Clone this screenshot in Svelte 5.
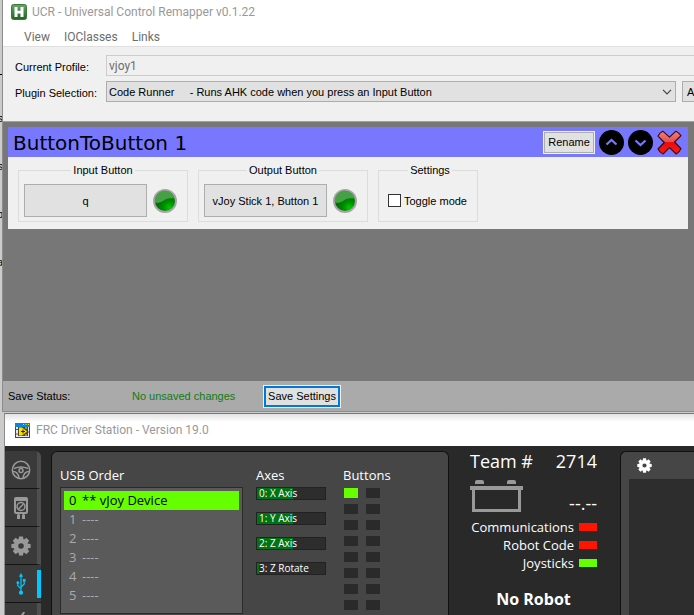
<script lang="ts">
	let profile = $state('vjoy1');
	let toggleMode = $state(false);
	let selectedDevice = $state(0);

	const menus = ['View', 'IOClasses', 'Links'];

	const groups = [
		{ id: 'input', title: 'Input Button', binding: 'q' },
		{ id: 'output', title: 'Output Button', binding: 'vJoy Stick 1, Button 1' }
	];

	const devices = ['** vJoy Device', '----', '----', '----', '----', '----'];

	const axes = [
		{ name: '0: X Axis', value: 53 },
		{ name: '1: Y Axis', value: 53 },
		{ name: '2: Z Axis', value: 53 },
		{ name: '3: Z Rotate', value: 3 }
	];

	const joyButtons = Array.from({ length: 16 }, (_, i) => i === 0);

	const robotStatus = [
		{ label: 'Communications', ok: false },
		{ label: 'Robot Code', ok: false },
		{ label: 'Joysticks', ok: true }
	];

	const gearTeeth = [0, 45, 90, 135, 180, 225, 270, 315];
</script>

{#snippet gear()}
	<svg class="gear" viewBox="0 0 20 20" aria-hidden="true">
		<circle cx="10" cy="10" r="5" fill="none" stroke="currentColor" stroke-width="4.4" />
		{#each gearTeeth as angle}
			<path d="M8 0.4h4l0.6 4h-5.2z" fill="currentColor" transform="rotate({angle} 10 10)" />
		{/each}
	</svg>
{/snippet}

<div class="desktop">
	<div class="behind" aria-hidden="true">
		<span>s</span>
		<span>s</span>
		<span>b</span>
		<span>a</span>
	</div>

	<section class="remapper">
		<header class="titlebar">
			<svg class="app-icon" viewBox="0 0 16 16" aria-hidden="true">
				<defs>
					<linearGradient id="ahk" x1="0" y1="0" x2="0" y2="1">
						<stop offset="0" stop-color="#6aa56a" />
						<stop offset="1" stop-color="#1c641f" />
					</linearGradient>
				</defs>
				<rect x="0.5" y="0.5" width="15" height="15" rx="2" fill="url(#ahk)" stroke="#397a3b" />
				<path d="M3.5 3h3v3.7h3V3h3v10h-3V9.4h-3V13h-3z" fill="#fff" />
			</svg>
			<span>UCR - Universal Control Remapper v0.1.22</span>
		</header>

		<nav class="menubar">
			{#each menus as menu}
				<button>{menu}</button>
			{/each}
		</nav>

		<div class="form">
			<label for="profile">Current Profile:</label>
			<input id="profile" type="text" bind:value={profile} disabled />
			<label for="plugin">Plugin Selection:</label>
			<div class="plugin-row">
				<div class="combo">
					<select id="plugin">
						<option>Code Runner &nbsp;&nbsp;&nbsp; - Runs AHK code when you press an Input Button</option>
					</select>
					<svg viewBox="0 0 10 6" aria-hidden="true">
						<path d="M1 0.8l4 4 4-4" fill="none" stroke="#444" stroke-width="1.2" />
					</svg>
				</div>
				<button class="add">Add</button>
			</div>
		</div>

		<main class="canvas">
			<article class="plugin">
				<header class="plugin-head">
					<h1>ButtonToButton 1</h1>
					<button class="rename">Rename</button>
					<button class="round" aria-label="Move up">
						<svg viewBox="0 0 25 25">
							<circle cx="12.5" cy="12.5" r="12.5" />
							<path d="M7.5 14.5l5-4.5 5 4.5" fill="none" stroke="#7878ff" stroke-width="2.2" />
						</svg>
					</button>
					<button class="round" aria-label="Move down">
						<svg viewBox="0 0 25 25">
							<circle cx="12.5" cy="12.5" r="12.5" />
							<path d="M7.5 10.5l5 4.5 5-4.5" fill="none" stroke="#7878ff" stroke-width="2.2" />
						</svg>
					</button>
					<button class="round" aria-label="Delete">
						<svg viewBox="0 0 25 25">
							<defs>
								<linearGradient id="cross" x1="0" y1="0" x2="0" y2="1">
									<stop offset="0" stop-color="#f08080" />
									<stop offset="0.45" stop-color="#e65050" />
									<stop offset="0.5" stop-color="#e80c0c" />
									<stop offset="1" stop-color="#ff1818" />
								</linearGradient>
							</defs>
							<path
								d="M5.8 1.2L12.5 7.2 18.9 1.2Q21.500 2.300 24 5.600L17.600 12 24 18.600Q22.500 22 19.200 24L12.500 17.600 6.100 24Q2.700 22.600 1 19L7.300 12.500 1 6.100Q2.700 2.400 5.800 1.200z"
								fill="url(#cross)"
								stroke="#3c0505"
								stroke-width="1.1"
								stroke-linejoin="round"
							/>
						</svg>
					</button>
				</header>

				<div class="groups">
					{#each groups as group (group.id)}
						<fieldset>
							<legend>{group.title}</legend>
							<button class="bind">{group.binding}</button>
							<svg class="led" viewBox="0 0 24 24" aria-hidden="true">
								<defs>
									<radialGradient id="led-{group.id}" cx="0.7" cy="0.8" r="0.7">
										<stop offset="0" stop-color="#00c800" />
										<stop offset="0.4" stop-color="#008c00" />
										<stop offset="1" stop-color="#006000" />
									</radialGradient>
								</defs>
								<circle cx="12" cy="12" r="11" fill="url(#led-{group.id})" stroke="#a8a4a8" stroke-width="2" />
								<path d="M2 13.5A10 10 0 0 1 21.7 9.6C15 8.2 12 10.5 9 12.5 6.5 14 4 14.3 2 13.5z" fill="#46a046" />
							</svg>
						</fieldset>
					{/each}
					<fieldset class="settings">
						<legend>Settings</legend>
						<label>
							<input type="checkbox" bind:checked={toggleMode} />
							Toggle mode
						</label>
					</fieldset>
				</div>
			</article>
		</main>

		<footer class="savebar">
			<span class="save-label">Save Status:</span>
			<output>No unsaved changes</output>
			<button class="save">Save Settings</button>
		</footer>
	</section>

	<section class="station">
		<header class="station-title">
			<svg class="lv-icon" viewBox="0 0 15 15" aria-hidden="true">
				<rect x="0.5" y="0.5" width="14" height="14" fill="#d8ecff" stroke="#0a50b4" />
				<rect width="15" height="4" fill="#0c84dc" />
				<path d="M8 1.5h1M10.5 1.5h1M13 1.5h1" stroke="#ffe000" stroke-width="1.2" />
				<path d="M1 6.500h3M1 11h3M11 9h3" stroke="#e02020" />
				<rect x="3" y="4" width="10" height="9" fill="#554a10" />
				<path d="M4 4.500h3v8h-3zM7 4.500l5 4-5 4z" fill="#ffe000" />
				<path d="M6 8.500h4M8 6.500v4" stroke="#222" />
				<path d="M10 5h2M10 12h2" stroke="#ffe000" />
			</svg>
			<span>FRC Driver Station - Version 19.0</span>
		</header>

		<div class="station-body">
			<nav class="tabs">
				<button aria-label="Operation">
					<svg viewBox="0 0 20 20" fill="none" stroke="currentColor">
						<circle cx="10" cy="10" r="8.700" stroke-width="1.500" />
						<path d="M3 8.500q7-3 14 0" stroke-width="1.500" />
						<circle cx="10" cy="10.500" r="2" stroke-width="1.500" />
						<path d="M2 11.500q5 0 6 6.500M18 11.500q-5 0-6 6.500" stroke-width="1.500" />
					</svg>
				</button>
				<button aria-label="Diagnostics">
					<svg viewBox="0 0 20 22" fill="none" stroke="currentColor">
						<rect x="4" y="1" width="12" height="15" rx="1" stroke-width="2" />
						<path d="M5 3h10" stroke-width="2" />
						<circle cx="10" cy="9.500" r="4" stroke-width="1.500" />
						<path d="M7.500 12l5-5" stroke-width="1.500" />
						<path d="M7.500 16v3M12.500 16v3" stroke-width="2" />
						<path d="M7.500 18v4M12.500 18v4" stroke-width="3" />
					</svg>
				</button>
				<button aria-label="Setup">{@render gear()}</button>
				<button class="active" aria-label="USB devices">
					<svg viewBox="0 0 20 24" fill="none" stroke="currentColor">
						<path d="M10 3v18M10 17l-3.500-3v-3M10 15.500l3.500-3.500V9" stroke-width="1.300" />
						<path d="M7.700 4L10 0l2.300 4z" fill="currentColor" stroke="none" />
						<circle cx="6.500" cy="10.500" r="1.500" fill="currentColor" stroke="none" />
						<rect x="12" y="6.500" width="3" height="3" fill="currentColor" stroke="none" />
						<circle cx="10" cy="21.500" r="2.300" fill="currentColor" stroke="none" />
					</svg>
				</button>
				<button aria-label="Power">
					<svg viewBox="0 0 20 20">
						<path d="M12 0L5 10h4l-3 8 9-11h-4l3-7z" fill="currentColor" />
					</svg>
				</button>
			</nav>

			<div class="usb-panel">
				<div class="usb-list">
					<h2>USB Order</h2>
					<ul>
						{#each devices as device, i}
							<li>
								<button class:selected={i === selectedDevice} onclick={() => (selectedDevice = i)}>
									<span>{i}</span>{device}
								</button>
							</li>
						{/each}
					</ul>
				</div>
				<div class="axes">
					<h2>Axes</h2>
					{#each axes as axis}
						<div class="axis">
							<div class="fill" style="width: {axis.value}%"></div>
							<span>{axis.name}</span>
						</div>
					{/each}
				</div>
				<div class="joy-buttons">
					<h2>Buttons</h2>
					<div class="lamps">
						{#each joyButtons as pressed}
							<i class:pressed></i>
						{/each}
					</div>
				</div>
			</div>

			<div class="robot">
				<div class="team"><span>Team #</span><span>2714</span></div>
				<div class="battery">
					<svg viewBox="0 0 53 33" aria-hidden="true">
						<path d="M5 4V2q0-2 2-2h5q2 0 2 2v2zM37 4V2q0-2 2-2h5q2 0 2 2v2zM0 6h53v4H0z" fill="#999" />
						<path d="M3.500 9v21.500h46V9" fill="none" stroke="#999" stroke-width="3" />
					</svg>
					<span>--.--</span>
				</div>
				<ul class="lights">
					{#each robotStatus as item}
						<li>{item.label}<i class:ok={item.ok}></i></li>
					{/each}
				</ul>
				<strong>No Robot</strong>
			</div>

			<div class="log-panel">
				<button aria-label="Message settings">{@render gear()}</button>
				<div class="log"></div>
			</div>
		</div>
	</section>
</div>

<style>
	:global(body) {
		overflow: hidden;
	}

	.desktop {
		position: relative;
		display: flex;
		flex-direction: column;
		height: 100vh;
		overflow: hidden;
		background: #cbcbcb;
		font: 11px/14px 'Liberation Sans', Arial, sans-serif;
		color: #000;
	}

	button {
		padding: 0;
		border: 1px solid #adadad;
		border-radius: 0;
		background: #e1e1e1;
		font: inherit;
		color: inherit;
	}

	h1,
	h2,
	ul {
		margin: 0;
		padding: 0;
		font-weight: normal;
		list-style: none;
	}

	/* text of the window underneath, showing past the left edge */
	.behind {
		position: absolute;
		inset: 74px auto auto 0;
		display: flex;
		flex-direction: column;
		align-items: flex-end;
		gap: 34px;
		width: 3px;
		padding-top: 36px;
		border-top: 1px solid #000;
		overflow: hidden;
	}

	/* Remapper window */
	.remapper {
		flex: none;
		position: relative;
		margin-left: 2px;
		border-left: 1px solid #8c8c8c;
		border-bottom: 1px solid #8c8c8c;
		background: #fff;
	}

	.titlebar {
		display: flex;
		align-items: center;
		gap: 5px;
		height: 24px;
		padding-left: 8px;
		font: 12px/16px Roboto, 'Segoe UI', sans-serif;
		color: #999;
	}

	.app-icon {
		width: 16px;
		height: 16px;
	}

	.menubar {
		display: flex;
		gap: 14px;
		height: 22px;
		padding: 3px 21px 0;
		box-sizing: border-box;
		font: 12px/20px Roboto, 'Segoe UI', sans-serif;
		color: #6d6d6d;
	}

	.menubar button {
		border: 0;
		background: none;
	}

	.form {
		display: grid;
		grid-template-columns: 91px 1fr;
		row-gap: 5px;
		align-items: center;
		padding: 8px 0 19px 12px;
		border-top: 1px solid #e0e0e0;
		border-bottom: 1px solid #a0a0a0;
		background: #f0f0f0;
		overflow: hidden;
	}

	.form label {
		padding-top: 3px;
	}

	#profile {
		height: 21px;
		margin-right: -4px;
		padding: 0 2px;
		box-sizing: border-box;
		border: 1px solid #ccc;
		background: #f0f0f0;
		font: 12px/16px Roboto, 'Segoe UI', sans-serif;
		color: #6d6d6d;
	}

	.plugin-row {
		display: flex;
		gap: 6px;
		margin-right: -40px;
	}

	.combo {
		position: relative;
		flex: 1;
	}

	.combo select {
		display: block;
		width: 100%;
		height: 21px;
		padding: 0 20px 0 2px;
		appearance: none;
		border: 1px solid #adadad;
		border-radius: 0;
		background: #e1e1e1;
		font: inherit;
		color: #000;
	}

	.combo svg {
		position: absolute;
		top: 8px;
		right: 4px;
		width: 10px;
		height: 6px;
		pointer-events: none;
	}

	.add {
		width: 52px;
		padding-left: 4px;
		text-align: left;
	}

	.canvas {
		height: 259px;
		padding: 5px 6px 0 5px;
		box-sizing: border-box;
		background: #777;
	}

	.plugin {
		background: #f0f0f0;
	}

	.plugin-head {
		display: flex;
		align-items: center;
		gap: 4px;
		height: 30px;
		padding: 0 6px 0 5px;
		background: #7878ff;
	}

	.plugin-head h1 {
		flex: 1;
		padding-top: 2px;
		font: 20px/28px 'DejaVu Sans', Verdana, sans-serif;
	}

	.rename {
		width: 52px;
		height: 23px;
		border-color: #f0f0f0;
		box-shadow: inset 0 0 0 1px #adadad;
	}

	.round {
		display: block;
		width: 25px;
		height: 25px;
		border: 0;
		background: none;
	}

	.round svg {
		display: block;
	}

	.groups {
		display: flex;
		gap: 10px;
		padding: 6px 10px 7px;
	}

	fieldset {
		display: flex;
		align-items: center;
		gap: 6px;
		width: 170px;
		min-width: 0;
		margin: 0;
		padding: 7px 5px 4px;
		box-sizing: border-box;
		border: 1px solid #dcdcdc;
	}

	legend {
		margin: 0 auto;
		padding: 0 2px;
	}

	.bind {
		width: 123px;
		height: 33px;
	}

	.led {
		width: 24px;
		height: 24px;
	}

	.settings {
		width: 100px;
		padding-left: 9px;
	}

	.settings label {
		display: flex;
		align-items: center;
		gap: 3px;
		white-space: nowrap;
	}

	.settings input {
		width: 13px;
		height: 13px;
		margin: 0;
		appearance: none;
		border: 1px solid #333;
		background: #fff;
	}

	.settings input:checked {
		background: #333;
	}

	.savebar {
		display: flex;
		align-items: center;
		height: 30px;
		padding-left: 5px;
		background: #aaa;
	}

	.save-label {
		width: 124px;
	}

	.savebar output {
		width: 131px;
		color: #107c10;
	}

	.save {
		width: 78px;
		height: 23px;
		border: 1px solid #f0f0f0;
		box-shadow: inset 0 0 0 2px #0078d7;
	}

	/* Driver station window */
	.station {
		flex: 1;
		display: flex;
		flex-direction: column;
		min-height: 0;
		margin: 1px 0 0 4px;
		border-top: 1px solid #777;
		border-left: 1px solid #8c8c8c;
		background: #292929;
		color: #fff;
		font-family: 'Open Sans', 'Noto Sans', sans-serif;
	}

	.station-title {
		display: flex;
		flex: none;
		align-items: center;
		gap: 6px;
		height: 32px;
		padding-left: 10px;
		background: linear-gradient(#e2e2e2, #fff 8px);
		font: 12px/16px Roboto, 'Segoe UI', sans-serif;
		color: #999;
	}

	.lv-icon {
		width: 15px;
		height: 15px;
	}

	.station-body {
		flex: 1;
		display: flex;
		min-height: 0;
		padding-top: 5px;
	}

	.tabs {
		flex: none;
		width: 36px;
		border-top-right-radius: 6px;
		overflow: hidden;
	}

	.tabs button {
		display: flex;
		align-items: center;
		justify-content: center;
		width: 100%;
		height: 38px;
		border: 0;
		border-right: 4px solid #4f4f4f;
		border-bottom: 1px solid #141414;
		background: #3a3a3a;
		color: #999;
	}

	.tabs svg {
		width: 20px;
		height: 22px;
	}

	.tabs .active {
		border-right: 0;
		padding-right: 4px;
		background: linear-gradient(#00c8ff, #00c8ff) right / 4px 28px no-repeat #3a3a3a;
		color: #00c8ff;
	}

	.usb-panel {
		display: flex;
		flex: none;
		width: 398px;
		margin-left: 10px;
		padding: 14px 0 0 8px;
		box-sizing: border-box;
		border: 1px solid #111;
		border-bottom: 0;
		border-radius: 6px 6px 0 0;
		background: #464646;
	}

	h2 {
		height: 21px;
		font-size: 13px;
		line-height: 18px;
	}

	.usb-list {
		width: 183px;
	}

	.usb-list ul {
		height: 127px;
		padding: 3px;
		box-sizing: border-box;
		border: 1px solid #2a2a2a;
		background: #5a5a5a;
	}

	.usb-list li button {
		display: block;
		width: 100%;
		height: 19px;
		padding-left: 5px;
		border: 0;
		background: none;
		font: 13px/19px 'Open Sans', 'Noto Sans', sans-serif;
		text-align: left;
		color: #aaa;
	}

	.usb-list li span {
		display: inline-block;
		width: 13px;
	}

	.usb-list li .selected {
		background: #66ff00;
		color: #000;
	}

	.axes {
		width: 70px;
		margin-left: 13px;
	}

	.axis {
		position: relative;
		height: 13px;
		margin-bottom: 12px;
		box-sizing: border-box;
		border: 1px solid #222;
		background: #2d2d2d;
	}

	.fill {
		height: 100%;
		background: #007314;
	}

	.axis span {
		position: absolute;
		inset: 0 0 0 2px;
		font-size: 10px;
		line-height: 11px;
		white-space: nowrap;
	}

	.joy-buttons {
		margin-left: 17px;
	}

	.lamps {
		display: grid;
		grid-template-columns: 14px 14px;
		gap: 6px 8px;
		padding: 1px;
	}

	.lamps i {
		height: 10px;
		background: #2a2a2a;
	}

	.lamps .pressed {
		background: #66ff00;
	}

	.robot {
		flex: none;
		width: 127px;
		padding: 0 23px 0 21px;
	}

	.team {
		display: flex;
		justify-content: space-between;
		font-size: 18px;
		line-height: 20px;
	}

	.battery {
		display: flex;
		align-items: flex-end;
		justify-content: space-between;
		margin-top: 9px;
		font-size: 18px;
		line-height: 20px;
	}

	.battery svg {
		width: 53px;
		height: 33px;
	}

	.lights {
		margin-top: 5px;
		font-size: 13px;
		line-height: 18px;
	}

	.lights li {
		display: flex;
		align-items: center;
		justify-content: flex-end;
		gap: 5px;
	}

	.lights i {
		width: 18px;
		height: 8px;
		background: #ff1400;
	}

	.lights .ok {
		background: #66ff00;
	}

	.robot strong {
		display: block;
		margin-top: 16px;
		font-size: 16px;
		line-height: 22px;
		text-align: center;
	}

	.log-panel {
		flex: 1;
		display: flex;
		flex-direction: column;
		padding: 4px 0 0 8px;
		border: 1px solid #111;
		border-width: 1px 0 0 1px;
		border-top-left-radius: 6px;
		background: #464646;
	}

	.log-panel button {
		width: 15px;
		height: 15px;
		margin: 2px 0 6px 8px;
		border: 0;
		background: none;
		color: #fff;
	}

	.gear {
		display: block;
	}

	.log {
		flex: 1;
		background: #2d2d2d;
	}
</style>
